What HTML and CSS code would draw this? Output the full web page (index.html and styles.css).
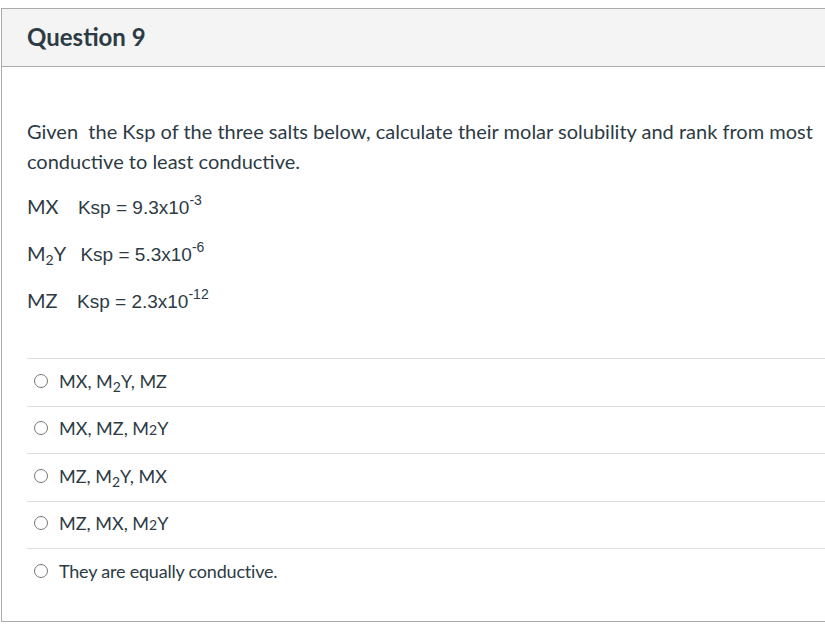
FILE: index.html
```html
<!DOCTYPE html>
<html>
<head>
<meta charset="utf-8">
<link rel="stylesheet" href="styles.css">
</head>
<body>
<div class="question">
  <div class="q-header"><h2 class="q-title">Question 9</h2></div>
  <div class="q-body">
    <p class="q-text">Given&nbsp; the Ksp of the three salts below, calculate their molar solubility and rank from most conductive to least conductive.</p>
    <p class="q-text"><span class="f">MX</span>&nbsp;&nbsp; <span class="a">Ksp = 9.3x10<sup>-3</sup></span></p>
    <p class="q-text"><span class="f">M<sub>2</sub>Y</span>&nbsp; <span class="a">Ksp = 5.3x10<sup>-6</sup></span></p>
    <p class="q-text"><span class="f">MZ</span>&nbsp;&nbsp; <span class="a">Ksp = 2.3x10<sup>-12</sup></span></p>
    <div class="answers">
      <label class="answer"><span class="radio"></span><span>MX, M<sub>2</sub>Y, MZ</span></label>
      <label class="answer"><span class="radio"></span><span>MX, MZ, M<span class="small2">2</span>Y</span></label>
      <label class="answer"><span class="radio"></span><span>MZ, M<sub>2</sub>Y, MX</span></label>
      <label class="answer"><span class="radio"></span><span>MZ, MX, M<span class="small2">2</span>Y</span></label>
      <label class="answer"><span class="radio"></span><span class="ans-small">They are equally conductive.</span></label>
    </div>
  </div>
</div>
</body>
</html>
```
FILE: styles.css
```css
html, body {
  margin: 0;
  padding: 0;
  background: #fff;
  overflow: hidden;
}
body {
  font-family: Lato, "Liberation Sans", sans-serif;
  color: #2d3b45;
}
.question {
  margin-top: 8px;
  margin-left: 1px;
  width: 840px;
  height: 614px;
  border: 1px solid #aaaaaa;
  box-sizing: border-box;
}
.q-header {
  height: 58px;
  background: #f4f4f4;
  border-bottom: 1px solid #aaaaaa;
  box-sizing: border-box;
  display: flex;
  align-items: center;
  padding-left: 25px;
  padding-bottom: 3px;
}
.q-title {
  margin: 0;
  font-size: 24px;
  font-weight: 700;
}
.q-body {
  padding: 49px 0 0 25px;
}
.q-text {
  margin: 0 0 15px 0;
  font-size: 20px;
  line-height: 30px;
  width: 792px;
}
.f {
  margin-right: 4px;
}
.a {
  font-family: "Liberation Sans", Arial, sans-serif;
  font-size: 19px;
}
sup, sub {
  font-size: 14px;
  line-height: 0;
  vertical-align: baseline;
  position: relative;
}
sup {
  top: -9px;
}
sub {
  top: 4px;
}
.answers {
  margin-top: 41px;
}
.answer {
  display: flex;
  align-items: center;
  height: 47.5px;
  border-top: 1px solid #dddddd;
  box-sizing: border-box;
  font-size: 18px;
  gap: 11px;
  padding-left: 7px;
  padding-bottom: 3px;
}
.radio {
  width: 14px;
  height: 14px;
  border: 1.3px solid #777;
  border-radius: 50%;
  box-sizing: border-box;
  flex: none;
}
.small2 {
  font-size: 14px;
}
.ans-small {
  letter-spacing: -0.2px;
}
```
